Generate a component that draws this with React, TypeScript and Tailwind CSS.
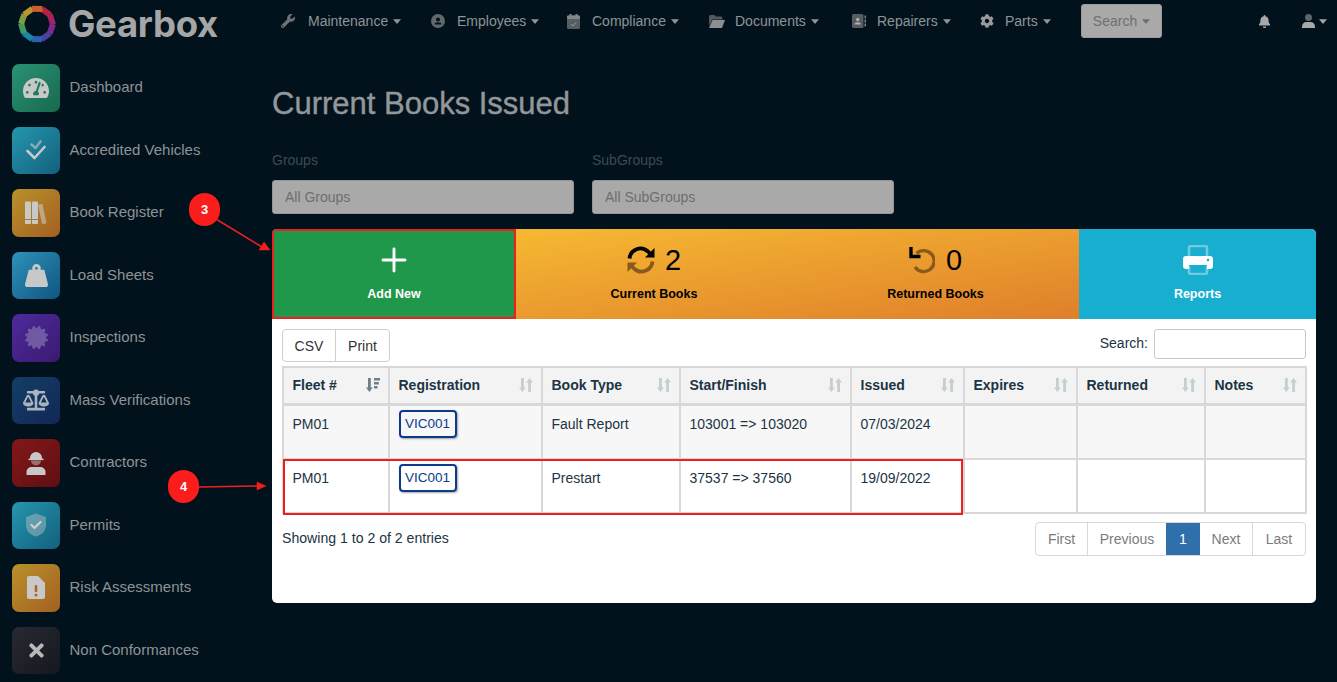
import type { ReactNode } from 'react'
import { FaBalanceScale, FaBell, FaCertificate, FaCog, FaTachometerAlt, FaTimes, FaWeightHanging, FaWrench } from 'react-icons/fa'

const FONT = "font-['Liberation_Sans',Arial,sans-serif]"

// Two tone icons drawn by hand, the icon packages only have flat versions
function ChecksIcon() {
  return (
    <svg width="20" height="20" viewBox="0 0 20 20" fill="none" stroke="#c8c8c8" strokeWidth="2.600" strokeLinecap="round" strokeLinejoin="round">
      <path d="M5.500 4.500l4 3.500 5-6.500" opacity="0.6" />
      <path d="M1.500 11l7 7L18.500 7" />
    </svg>
  )
}

function BooksIcon() {
  return (
    <svg width="24" height="24" viewBox="0 0 24 24" fill="#c8c8c8">
      <path d="M1 1.500A1 1 0 0 1 2 0.500h4a1 1 0 0 1 1 1V22a1 1 0 0 1-1 1H2a1 1 0 0 1-1-1z" />
      <path d="M8 1.500a1 1 0 0 1 1-1h4a1 1 0 0 1 1 1V22a1 1 0 0 1-1 1H9a1 1 0 0 1-1-1z" />
      <rect x="1" y="18" width="6" height="1" fill="#a9802a" />
      <rect x="8" y="18" width="6" height="1" fill="#a9802a" />
      <rect x="16" y="3" width="4.500" height="20" rx="1" transform="rotate(-12 18 13)" opacity="0.6" />
    </svg>
  )
}

function ContractorIcon() {
  return (
    <svg width="20" height="24" viewBox="0 0 20 24" fill="#c8c8c8">
      <path d="M4 7a6 6 0 0 1 12 0v1H4z" />
      <path d="M2.500 7.500h15v1.600h-15z" />
      <path d="M5 9.500h10a5 5 0 0 1-10 0z" opacity="0.5" />
      <path d="M0.500 24v-3C0.500 18 3 16 6 16h8c3 0 5.500 2 5.500 5v3z" />
    </svg>
  )
}

function ShieldIcon() {
  return (
    <svg width="22" height="24" viewBox="0 0 22 24">
      <path d="M11 0.500L21 4v8c0 6-4.500 10-10 11.500C5.500 22 1 18 1 12V4z" fill="#c8c8c8" opacity="0.42" />
      <path d="M6.500 12l3 3 6-6" fill="none" stroke="#d0d0d0" strokeWidth="2.200" strokeLinecap="round" strokeLinejoin="round" />
    </svg>
  )
}

function RiskIcon() {
  return (
    <svg width="18" height="23" viewBox="0 0 18 23">
      <path d="M2 0h9l7 7v14a2 2 0 0 1-2 2H2a2 2 0 0 1-2-2V2a2 2 0 0 1 2-2z" fill="#c8c8c8" />
      <rect x="7.700" y="9" width="2.600" height="7" rx="1" fill="#a86a22" />
      <circle cx="9" cy="19" r="1.500" fill="#a86a22" />
    </svg>
  )
}

function Logo() {
  const colours = ['#b3213f', '#a3255f', '#7c2b8c', '#4b3f9f', '#2a62ad', '#1c86a8', '#3f9a66', '#7f9c3e', '#b9962f', '#c8612e']
  return (
    <svg width="40" height="40" viewBox="-20 -20 40 40" className="shrink-0">
      {colours.map((c, i) => {
        const a0 = ((i * 36 - 18 - 90 + 36) * Math.PI) / 180
        const a1 = ((i * 36 + 20 - 90 + 36) * Math.PI) / 180
        return (
          <line
            key={c}
            x1={16 * Math.cos(a0)}
            y1={16 * Math.sin(a0)}
            x2={16 * Math.cos(a1)}
            y2={16 * Math.sin(a1)}
            stroke={c}
            strokeWidth="6"
          />
        )
      })}
    </svg>
  )
}

const sideItems: { label: string; tile: string; icon: ReactNode }[] = [
  { label: 'Dashboard', tile: 'from-[#2a9375] to-[#17694f]', icon: <FaTachometerAlt size={26} color="#c8c8c8" /> },
  { label: 'Accredited Vehicles', tile: 'from-[#2696ae] to-[#12617e]', icon: <ChecksIcon /> },
  { label: 'Book Register', tile: 'from-[#b8922a] to-[#a35f22]', icon: <BooksIcon /> },
  { label: 'Load Sheets', tile: 'from-[#2f93ba] to-[#0e5680]', icon: <FaWeightHanging size={23} color="#c8c8c8" /> },
  { label: 'Inspections', tile: 'from-[#4e2a9c] to-[#3b1a70]', icon: <FaCertificate size={23} color="#6f5aa3" /> },
  { label: 'Mass Verifications', tile: 'from-[#123f64] to-[#132758]', icon: <FaBalanceScale size={26} color="#a9b4bf" /> },
  { label: 'Contractors', tile: 'from-[#831818] to-[#5f0f12]', icon: <ContractorIcon /> },
  { label: 'Permits', tile: 'from-[#2696ae] to-[#12617e]', icon: <ShieldIcon /> },
  { label: 'Risk Assessments', tile: 'from-[#b8922a] to-[#a35f22]', icon: <RiskIcon /> },
  { label: 'Non Conformances', tile: 'from-[#272a33] to-[#16181f]', icon: <FaTimes size={21} color="#b8b8b8" /> },
]

function EmployeeIcon() {
  return (
    <svg width="14" height="14" viewBox="0 0 14 14">
      <circle cx="7" cy="7" r="7" fill="#62686c" />
      <circle cx="7" cy="5.500" r="2" fill="#01121d" />
      <path d="M3.500 10.500c0-1.500 1.500-2.300 3.500-2.300s3.500 0.800 3.500 2.300z" fill="#01121d" />
    </svg>
  )
}

function CalendarIcon() {
  return (
    <svg width="13" height="15" viewBox="0 0 13 15">
      <rect x="0" y="1.500" width="13" height="13.500" rx="1.500" fill="#565c61" />
      <rect x="0" y="1.500" width="13" height="3.500" rx="1" fill="#82878a" />
      <rect x="2.500" y="0" width="2" height="3" fill="#82878a" />
      <rect x="8.500" y="0" width="2" height="3" fill="#82878a" />
      <path d="M4 10l2 2 3-3.500" stroke="#9a9a9a" strokeWidth="1" fill="none" />
    </svg>
  )
}

function DocsIcon() {
  return (
    <svg width="16" height="13" viewBox="0 0 16 13">
      <path d="M0 1.500A1.500 1.500 0 0 1 1.500 0h4l1.500 1.500h5A1.500 1.500 0 0 1 13.500 3v1.500H3.500L0 11z" fill="#52585c" />
      <path d="M3.500 5H16l-3 8H0z" fill="#8c8f90" />
    </svg>
  )
}

function RepairerIcon() {
  return (
    <svg width="14" height="14" viewBox="0 0 14 14">
      <rect x="0" y="0" width="11.500" height="14" rx="1.500" fill="#565c61" />
      <circle cx="5.700" cy="5.500" r="1.700" fill="#b0b0b0" />
      <path d="M2.500 10.500c0-1.500 1.400-2.200 3.200-2.200s3.200 0.700 3.200 2.200z" fill="#b0b0b0" />
      <rect x="12.500" y="1.500" width="1.500" height="3" fill="#7b8084" />
      <rect x="12.500" y="5.500" width="1.500" height="3" fill="#7b8084" />
      <rect x="12.500" y="9.500" width="1.500" height="3" fill="#7b8084" />
    </svg>
  )
}

function UserIcon() {
  return (
    <svg width="13" height="14" viewBox="0 0 13 14">
      <circle cx="6.500" cy="3.500" r="3.500" fill="#5f6569" />
      <path d="M0 14v-1.500C0 10 2 8 4.500 8h4C11 8 13 10 13 12.500V14z" fill="#a8a8a8" />
    </svg>
  )
}

function Caret({ className }: { className?: string }) {
  return (
    <svg width="8" height="5" viewBox="0 0 8 5" fill="currentColor" className={className}>
      <path d="M0 0.200h8L4 5z" />
    </svg>
  )
}

const navItems: { label: string; width: string; slot: string; icon: ReactNode }[] = [
  { label: 'Maintenance', width: 'w-[150px]', slot: 'w-[27px]', icon: <FaWrench size={14} color="#6d7275" /> },
  { label: 'Employees', width: 'w-[136px]', slot: 'w-[26px]', icon: <EmployeeIcon /> },
  { label: 'Compliance', width: 'w-[142px]', slot: 'w-[25px]', icon: <CalendarIcon /> },
  { label: 'Documents', width: 'w-[143px]', slot: 'w-[26px]', icon: <DocsIcon /> },
  { label: 'Repairers', width: 'w-[128px]', slot: 'w-[25px]', icon: <RepairerIcon /> },
  { label: 'Parts', width: 'w-[101px]', slot: 'w-[25px]', icon: <FaCog size={14} color="#9a9a9a" /> },
]

function SortIcon({ active }: { active?: boolean }) {
  const colour = active ? '#6f7f89' : '#c5ced2'
  return (
    <svg width="14" height="14" viewBox="0 0 14 14" fill={colour} className="shrink-0">
      <path d="M2 0h2.800v9.500h2L3.400 14 0 9.500h2z" />
      {active ? (
        <>
          <rect x="8" y="0" width="6" height="2.500" />
          <rect x="8" y="4" width="4.800" height="2.500" />
          <rect x="8" y="8" width="3.500" height="2.500" />
        </>
      ) : (
        <path d="M9.200 14H12V4.500h2L10.600 0 7.200 4.500h2z" />
      )}
    </svg>
  )
}

function RefreshIcon() {
  return (
    <svg width="28" height="28" viewBox="0 0 28 28" fill="none">
      <path d="M2.500 12.500A11 11 0 0 1 21 5.500l3 3" stroke="#000" strokeWidth="3.800" />
      <path d="M18 11.500h9.500V2z" fill="#000" />
      <path d="M25.500 15.500A11 11 0 0 1 7 22.500l-3-3" stroke="#8a5a1c" strokeWidth="3.800" />
      <path d="M10 16.500H0.500V26z" fill="#8a5a1c" />
    </svg>
  )
}

function UndoIcon() {
  return (
    <svg width="26" height="28" viewBox="0 0 26 28" fill="none">
      <path d="M7.500 7.500A10.500 10.500 0 1 1 6 21" stroke="#8a5a1c" strokeWidth="3.400" />
      <path d="M2 1v9.500h9.500" stroke="#000" strokeWidth="3.400" />
    </svg>
  )
}

function PrinterIcon() {
  return (
    <svg width="30" height="30" viewBox="0 0 30 30">
      <path d="M6 11V3a2 2 0 0 1 2-2h14a2 2 0 0 1 2 2v8M6 21v6a2 2 0 0 0 2 2h14a2 2 0 0 0 2-2v-6" fill="none" stroke="#6fcbe0" strokeWidth="2.600" />
      <path d="M3 11h24a3 3 0 0 1 3 3v7a3 3 0 0 1-3 3h-3v-4H6v4H3a3 3 0 0 1-3-3v-7a3 3 0 0 1 3-3z" fill="#fff" />
      <circle cx="25" cy="15" r="1.300" fill="#18aed0" />
    </svg>
  )
}

const columns = [
  { label: 'Fleet #', width: 'w-[106px]', active: true },
  { label: 'Registration', width: 'w-[153px]' },
  { label: 'Book Type', width: 'w-[138px]' },
  { label: 'Start/Finish', width: 'w-[171px]' },
  { label: 'Issued', width: 'w-[113px]' },
  { label: 'Expires', width: 'w-[113px]' },
  { label: 'Returned', width: 'w-[128px]' },
  { label: 'Notes', width: 'w-[101px]' },
]

const rows = [
  { fleet: 'PM01', reg: 'VIC001', type: 'Fault Report', range: '103001 => 103020', issued: '07/03/2024', bg: 'bg-[#f7f7f7]' },
  { fleet: 'PM01', reg: 'VIC001', type: 'Prestart', range: '37537 => 37560', issued: '19/09/2022', bg: 'bg-white' },
]

const cell = 'border-2 border-[#d8d8d8] px-[8.500px] pt-[8px] align-top'

function Marker({ n, className }: { n: number; className: string }) {
  return (
    <div className={`absolute flex h-[33px] w-[31px] items-center justify-center rounded-full bg-[#fb1c1c] text-[13px] font-bold text-white ${className}`}>
      {n}
    </div>
  )
}

export default function App() {
  return (
    <div className={`relative flex h-screen overflow-hidden bg-[#01121d] ${FONT}`}>
      <aside className="w-[272px] shrink-0">
        <div className="flex h-[64px] items-start pl-[17px] pt-[4px]">
          <Logo />
          <span className="ml-[11px] font-['Inter',sans-serif] text-[36.500px] font-bold leading-[40px] tracking-[-0.3px] text-[#a6a6a6]">Gearbox</span>
        </div>
        <nav className="flex flex-col gap-[15px] pl-[12px]">
          {sideItems.map(item => (
            <div key={item.label} className="flex items-center">
              <div className={`flex h-[47.5px] w-[48px] items-center justify-center rounded-[7px] bg-gradient-to-br ${item.tile}`}>
                {item.icon}
              </div>
              <span className="ml-[9.500px] pb-[1px] text-[15px] text-[#8e9396]">{item.label}</span>
            </div>
          ))}
        </nav>
      </aside>

      <main className="flex-1">
        <header className="flex h-[42px] items-center pl-[9px] text-[14px] text-[#8f9496]">
          {navItems.map(item => (
            <div key={item.label} className={`flex items-center ${item.width}`}>
              <span className={`flex shrink-0 ${item.slot}`}>{item.icon}</span>
              <span>{item.label}</span>
              <Caret className="ml-[5px]" />
            </div>
          ))}
          <div className="flex h-[34px] w-[81px] items-center justify-center rounded-[3px] border border-[#9b9b9b] bg-[#a9a9a9] text-[#6f6f6f]">
            Search
            <Caret className="ml-[5px]" />
          </div>
          <FaBell size={13} color="#a8a8a8" className="ml-[96px]" />
          <span className="ml-[31px] flex"><UserIcon /></span>
          <Caret className="ml-[4px] text-[#a3a3a3]" />
        </header>

        <h1 className="mt-[43px] text-[31px] leading-[38px] text-[#93979a] [-webkit-text-stroke:0.4px_#93979a]">Current Books Issued</h1>

        <div className="mt-[27px] flex gap-[18px] text-[14px]">
          <label className="w-[302px] text-[#3e4a51]">
            <span className="block leading-[20px]">Groups</span>
            <span className="mt-[10px] flex h-[34px] items-center rounded-[3px] border border-[#969696] bg-[#a9a9a9] pl-[12px] text-[#6e6e6e]">All Groups</span>
          </label>
          <label className="w-[302px] text-[#3e4a51]">
            <span className="block leading-[20px]">SubGroups</span>
            <span className="mt-[10px] flex h-[34px] items-center rounded-[3px] border border-[#969696] bg-[#a9a9a9] pl-[12px] text-[#6e6e6e]">All SubGroups</span>
          </label>
        </div>

        <section className="mt-[15px] h-[374px] w-[1044px] overflow-hidden rounded-[5px] bg-white">
          <div className="flex h-[90px]">
            <div className="flex w-[244px] flex-col items-center border-2 border-[#f01f1f] bg-[#1f984b] pt-[16px] text-white">
              <svg width="26" height="26" viewBox="0 0 26 26" fill="none" stroke="#fff" strokeWidth="2.900" strokeLinecap="round">
                <path d="M13 2v22M2 13h22" />
              </svg>
              <span className="mt-[13px] text-[12.500px] font-bold leading-[16px]">Add New</span>
            </div>
            <div className="flex flex-1 bg-[linear-gradient(172deg,#f6b932,#df7f2b)] text-black">
              <div className="flex w-[276px] flex-col items-center pt-[17px]">
                <div className="flex h-[28px] items-center gap-[10px]">
                  <RefreshIcon />
                  <span className="text-[29px] leading-[28px]">2</span>
                </div>
                <span className="mt-[12px] text-[12.500px] font-bold leading-[16px]">Current Books</span>
              </div>
              <div className="flex w-[287px] flex-col items-center pt-[17px]">
                <div className="flex h-[28px] items-center gap-[11px]">
                  <UndoIcon />
                  <span className="text-[29px] leading-[28px]">0</span>
                </div>
                <span className="mt-[12px] text-[12.500px] font-bold leading-[16px]">Returned Books</span>
              </div>
            </div>
            <div className="flex w-[237px] flex-col items-center bg-[#18aed0] pt-[16px] text-white">
              <PrinterIcon />
              <span className="mt-[11px] text-[12.500px] font-bold leading-[16px]">Reports</span>
            </div>
          </div>

          <div className="px-[10px] pt-[10px] text-[14px] text-[#1c3444]">
            <div className="flex items-start justify-between">
              <div className="flex h-[33px] rounded-[4px] border border-[#cfcfcf] text-[#333]">
                <span className="flex w-[53px] items-center justify-center border-r border-[#cfcfcf] pt-[1px]">CSV</span>
                <span className="flex w-[53px] items-center justify-center pt-[1px]">Print</span>
              </div>
              <div className="flex items-center gap-[6px]">
                <span className="pb-[2px]">Search:</span>
                <span className="h-[30px] w-[152px] rounded-[3px] border border-[#c9c9c9]" />
              </div>
            </div>

            <table className="mt-[4px] w-[1023px] table-fixed border-collapse">
              <thead>
                <tr className="h-[37px] bg-[#f3f3f3]">
                  {columns.map(col => (
                    <th key={col.label} className={`${col.width} border-2 border-b-[3px] border-[#d8d8d8] px-[8.500px] text-left font-bold`}>
                      <div className="flex items-center justify-between">
                        {col.label}
                        <SortIcon active={col.active} />
                      </div>
                    </th>
                  ))}
                </tr>
              </thead>
              <tbody>
                {rows.map(row => (
                  <tr key={row.range} className={`h-[54.500px] ${row.bg}`}>
                    <td className={cell}>{row.fleet}</td>
                    <td className={`${cell} !pt-[4px]`}>
                      <span className="inline-block h-[28px] rounded-[4px] border-2 border-[#0c3b8e] px-[4.500px] text-[13.500px] leading-[24px] text-[#0c3b8e] shadow-[1px_1px_2px_rgba(0,0,0,0.35)]">{row.reg}</span>
                    </td>
                    <td className={cell}>{row.type}</td>
                    <td className={cell}>{row.range}</td>
                    <td className={cell}>{row.issued}</td>
                    <td className={cell} />
                    <td className={cell} />
                    <td className={cell} />
                  </tr>
                ))}
              </tbody>
            </table>

            <div className="mt-[8px] flex items-start justify-between">
              <span className="mt-[8px] text-[14.100px] leading-[16px]">Showing 1 to 2 of 2 entries</span>
              <div className="flex h-[34px] overflow-hidden rounded-[4px] border border-[#d8d8d8] text-[#7b7b7b]">
                <span className="flex w-[52px] items-center justify-center border-r border-[#d8d8d8]">First</span>
                <span className="flex w-[78px] items-center justify-center">Previous</span>
                <span className="flex w-[34px] items-center justify-center bg-[#2f70ac] text-white">1</span>
                <span className="flex w-[53px] items-center justify-center border-r border-[#d8d8d8]">Next</span>
                <span className="flex w-[52px] items-center justify-center">Last</span>
              </div>
            </div>
          </div>
        </section>
      </main>

      {/* Callouts painted on top of the screenshot */}
      <div className="absolute left-[283px] top-[459px] h-[56px] w-[680px] border-2 border-[#f01f1f]" />
      <Marker n={3} className="left-[189px] top-[193px]" />
      <Marker n={4} className="left-[168px] top-[470px]" />
      <svg className="pointer-events-none absolute left-0 top-0" width="300" height="520" fill="#f01f1f" stroke="#f01f1f">
        <path d="M216 219L262 247" strokeWidth="1.500" />
        <path d="M270 250L259 250L264 242z" strokeWidth="0.500" />
        <path d="M199 487L258 486" strokeWidth="1.500" />
        <path d="M266 486L257 482L257 490z" strokeWidth="0.500" />
      </svg>
    </div>
  )
}
